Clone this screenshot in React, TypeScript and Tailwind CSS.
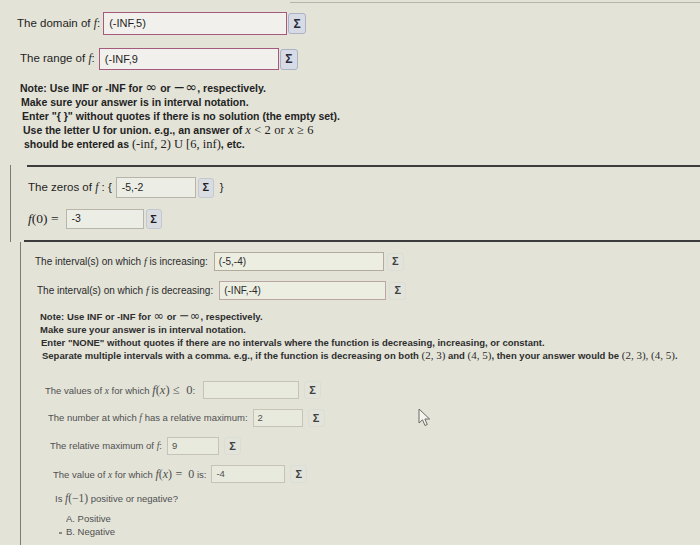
import React from "react";

const M = ({ children }: { children: React.ReactNode }) => (
  <span className="font-['Liberation_Serif',serif] italic">{children}</span>
);

const R = ({ children }: { children: React.ReactNode }) => (
  <span className="font-['Liberation_Serif',serif]">{children}</span>
);

const Inf = ({ neg }: { neg?: boolean }) => (
  <span className="font-['DejaVu_Sans',sans-serif] font-normal text-[1.35em] leading-[0]">{neg ? "−∞" : "∞"}</span>
);

function SigmaTop() {
  return (
    <span className="ml-px flex h-[21px] w-[18px] items-center justify-center rounded-[3px] border border-[#aab2c4] bg-[#d6dbe6] font-['Liberation_Sans',sans-serif] text-[12px] font-bold text-[#2a2a3a]">
      Σ
    </span>
  );
}

function SigmaLow() {
  return (
    <span className="flex h-[18px] w-[17px] items-center justify-center rounded-[3px] border border-[#dcddd3] bg-[#e2e3da] text-[11px] font-bold text-[#404040]">
      Σ
    </span>
  );
}

function Cursor() {
  return (
    <svg width="14" height="19" viewBox="0 0 14 19" className="absolute left-[418px] top-[408px]">
      <path
        d="M1 1 L1 15 L4.5 11.8 L7 17.5 L9.3 16.5 L6.9 11 L11.6 11 Z"
        fill="#f4f4ee"
        stroke="#6a6a66"
        strokeWidth="1"
        strokeLinejoin="round"
      />
    </svg>
  );
}

export default function App() {
  return (
    <div className="relative h-[545px] w-[700px] overflow-hidden bg-[#e3e3d8] font-['Liberation_Sans',sans-serif] text-[#1e1e1e]">
      <div className="mt-[2px] ml-[290px] h-px bg-[#b4b4ac]" />

      {/* domain / range */}
      <div className="mt-[9px] flex h-[23px] items-center pl-[17px]">
        <span className="text-[11.5px]">
          The domain of <M>f</M>:
        </span>
        <span className="ml-[3px] flex h-[23px] w-[184px] items-center border border-[#a35a7c] bg-[#f2f0ec] px-[5px] text-[11px]">
          (-INF,5)
        </span>
        <SigmaTop />
      </div>
      <div className="mt-[13px] flex h-[22px] items-center pl-[20px]">
        <span className="text-[11.5px]">
          The range of <M>f</M>:
        </span>
        <span className="ml-[4px] flex h-[22px] w-[180px] items-center border border-[#a35a7c] bg-[#f2f0ec] px-[5px] text-[11px]">
          (-INF,9
        </span>
        <SigmaTop />
      </div>

      <div className="mt-[11px] text-[10.5px] font-bold leading-[14px] text-[#222]">
        <p className="pl-[20px]">
          Note: Use INF or -INF for <Inf /> or <Inf neg />, respectively.
        </p>
        <p className="pl-[21px]">Make sure your answer is in interval notation.</p>
        <p className="pl-[22px]">Enter "{"{ }"}" without quotes if there is no solution (the empty set).</p>
        <p className="pl-[23px]">
          Use the letter U for union. e.g., an answer of{" "}
          <span className="text-[12.5px] font-normal">
            <M>x</M> <R>&lt; 2</R> <R>or</R> <M>x</M> <R>≥ 6</R>
          </span>
        </p>
        <p className="pl-[24px]">
          should be entered as{" "}
          <span className="text-[12.5px] font-normal">
            <R>(-inf, 2) U [6, inf)</R>
          </span>
          , etc.
        </p>
      </div>

      {/* zeros / f(0) */}
      <div className="mt-[14px] ml-[10px] border-l border-[#7c7c74]">
        <div className="ml-[16px] h-[2px] bg-[#3c3c3c]" />
        <div className="mt-[10px] flex h-[21px] items-center pl-[17px] text-[11.5px]">
          <span>
            The zeros of <M>f</M> : {"{"}
          </span>
          <span className="ml-[4px] flex h-[21px] w-[80px] items-center border border-[#b9b4ab] bg-[#eceee6] px-[5px] text-[10.5px]">
            -5,-2
          </span>
          <span className="ml-[2px] flex h-[20px] w-[16px] items-center justify-center rounded-[3px] border border-[#c3c7cf] bg-[#d9dde2] text-[11px] font-bold">
            Σ
          </span>
          <span className="ml-[6px]">{"}"}</span>
        </div>
        <div className="mt-[11px] flex h-[20px] items-center pl-[17px] text-[11px]">
          <span className="text-[13.5px]">
            <M>f</M>
            <R>(0) =</R>
          </span>
          <span className="ml-[7px] flex h-[20px] w-[78px] items-center border border-[#bab5aa] bg-[#eceee6] px-[5px] text-[10.5px]">
            -3
          </span>
          <span className="ml-[2px] flex h-[20px] w-[16px] items-center justify-center rounded-[3px] border border-[#c3c7cf] bg-[#d9dde2] text-[11px] font-bold">
            Σ
          </span>
        </div>
        <div className="mt-[11px] ml-[13px] h-[2px] bg-[#3c3c3c]" />
      </div>

      {/* intervals and the rest */}
      <div className="ml-[20px] h-[320px] border-l border-[#7c7c74]">
        <div className="pt-[10px]">
          <div className="flex h-[19px] items-center pl-[14px] text-[10px] text-[#2a2a2a]">
            <span>
              The interval(s) on which <M>f</M> is increasing:
            </span>
            <span className="ml-[6px] flex h-[19px] w-[170px] items-center border border-[#b3aa9e] bg-[#eceee2] px-[4px] text-[10px]">
              (-5,-4)
            </span>
            <span className="ml-[3px]">
              <SigmaLow />
            </span>
          </div>
          <div className="mt-[10px] flex h-[19px] items-center pl-[16px] text-[10px] text-[#2a2a2a]">
            <span>
              The interval(s) on which <M>f</M> is decreasing:
            </span>
            <span className="ml-[6px] flex h-[19px] w-[167px] items-center border border-[#bba6a6] bg-[#eceee2] px-[4px] text-[10px]">
              (-INF,-4)
            </span>
            <span className="ml-[3px]">
              <SigmaLow />
            </span>
          </div>
        </div>

        <div className="mt-[10px] text-[9.5px] font-bold leading-[13px] text-[#2e2e2e]">
          <p className="pl-[19px]">
            Note: Use INF or -INF for <Inf /> or <Inf neg />, respectively.
          </p>
          <p className="pl-[19px]">Make sure your answer is in interval notation.</p>
          <p className="pl-[20px]">
            Enter "NONE" without quotes if there are no intervals where the function is decreasing, increasing, or
            constant.
          </p>
          <p className="pl-[21px]">
            Separate multiple intervals with a comma. e.g., if the function is decreasing on both{" "}
            <span className="text-[11px] font-normal">
              <R>(2, 3)</R>
            </span>{" "}
            and{" "}
            <span className="text-[11px] font-normal">
              <R>(4, 5)</R>
            </span>
            , then your answer would be{" "}
            <span className="text-[11px] font-normal">
              <R>(2, 3), (4, 5)</R>
            </span>
            .
          </p>
        </div>

        <div className="text-[9.5px] text-[#505050]">
          <div className="mt-[19px] flex h-[18px] items-center pl-[24px]">
            <span>
              The values of <M>x</M> for which{" "}
              <span className="text-[12.5px]">
                <M>f</M>
                <R>(</R>
                <M>x</M>
                <R>)</R> <R>≤&nbsp;&nbsp;0</R>
              </span>
              :
            </span>
            <span className="ml-[8px] h-[18px] w-[96px] border border-[#c6c4b6] bg-[#e9eade]" />
            <span className="ml-[5px]">
              <SigmaLow />
            </span>
          </div>
          <div className="mt-[10px] flex h-[18px] items-center pl-[27px]">
            <span>
              The number at which <M>f</M> has a relative maximum:
            </span>
            <span className="ml-[5px] flex h-[18px] w-[50px] items-center border border-[#c6c4b6] bg-[#e9eade] px-[4px]">
              2
            </span>
            <span className="ml-[5px]">
              <SigmaLow />
            </span>
          </div>
          <div className="mt-[10px] flex h-[18px] items-center pl-[29px]">
            <span>
              The relative maximum of <M>f</M>:
            </span>
            <span className="ml-[5px] flex h-[18px] w-[52px] items-center border border-[#c6c4b6] bg-[#e9eade] px-[4px]">
              9
            </span>
            <span className="ml-[5px]">
              <SigmaLow />
            </span>
          </div>
          <div className="mt-[10px] flex h-[18px] items-center pl-[32px]">
            <span>
              The value of <M>x</M> for which{" "}
              <span className="text-[12px]">
                <M>f</M>
                <R>(</R>
                <M>x</M>
                <R>)</R> <R>=&nbsp;&nbsp;0</R>
              </span>{" "}
              is:
            </span>
            <span className="ml-[5px] flex h-[18px] w-[74px] items-center border border-[#c6c4b6] bg-[#e9eade] px-[4px]">
              -4
            </span>
            <span className="ml-[5px]">
              <SigmaLow />
            </span>
          </div>
          <div className="mt-[9px] flex h-[14px] items-center pl-[34px]">
            <span>
              Is{" "}
              <span className="text-[11.5px]">
                <M>f</M>
                <R>(−1)</R>
              </span>{" "}
              positive or negative?
            </span>
          </div>
          <div className="mt-[7px] flex h-[13px] items-center pl-[45px]">A. Positive</div>
          <div className="flex h-[13px] items-center pl-[38px]">
            <span className="mr-[4px] h-[2px] w-[3px] bg-[#8a8a80]" />
            B. Negative
          </div>
        </div>
      </div>

      <Cursor />
    </div>
  );
}
